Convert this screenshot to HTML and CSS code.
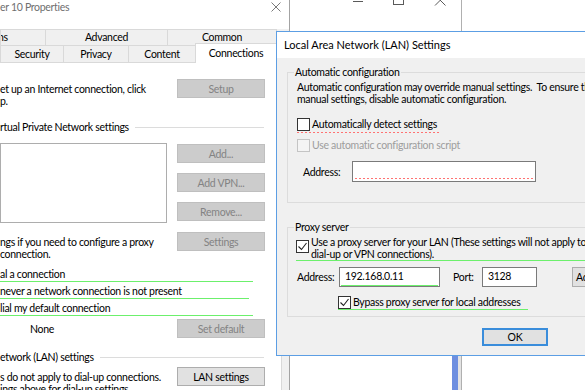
FILE: index.html
```html
<!DOCTYPE html>
<html>
<head>
<meta charset="utf-8">
<link rel="stylesheet" href="styles.css">
</head>
<body>
<div class="desk">

  <div class="win3">
    <svg class="w3-ctrls" width="172" height="10" viewBox="0 0 172 10">
      <line x1="63" y1="1.5" x2="73" y2="1.5" stroke="#5a5a5a" stroke-width="1"/>
      <rect x="103.5" y="-5.5" width="10" height="10" fill="none" stroke="#5a5a5a" stroke-width="1"/>
      <line x1="145" y1="-5" x2="155.5" y2="5.5" stroke="#5a5a5a" stroke-width="1"/>
      <line x1="155.5" y1="-5" x2="145" y2="5.5" stroke="#5a5a5a" stroke-width="1"/>
    </svg>
    <div class="w3-body">
      <div class="w3-main"></div>
      <div class="w3-stripe"></div>
      <div class="w3-edge"></div>
    </div>
  </div>

  <div class="win-props">
    <div class="titlebar">
      <span class="title">er 10 Properties</span>
      <svg class="close" width="10" height="10" viewBox="0 0 10 10">
        <line x1="0.5" y1="0.5" x2="9.5" y2="9.5" stroke="#7a7a7a" stroke-width="1"/>
        <line x1="9.5" y1="0.5" x2="0.5" y2="9.5" stroke="#7a7a7a" stroke-width="1"/>
      </svg>
    </div>
    <div class="tabs">
      <div class="tabrow r1">
        <div class="tab w45"><span class="cut">ns</span></div>
        <div class="tab w122">Advanced</div>
        <div class="tab w109">Common</div>
      </div>
      <div class="tabrow r2">
        <div class="tab w63">Security</div>
        <div class="tab w65">Privacy</div>
        <div class="tab w67">Content</div>
        <div class="tab sel">Connections</div>
      </div>
    </div>
    <div class="page">
      <div class="row ra">
        <div class="txt">et up an Internet connection, click<br>p.</div>
        <div class="btn dis">Setup</div>
      </div>
      <div class="hdr h1">
        <span>rtual Private Network settings</span>
        <div class="hline"></div>
      </div>
      <div class="row vpn">
        <div class="listbox"></div>
        <div class="btncol">
          <div class="btn dis">Add...</div>
          <div class="btn dis">Add VPN...</div>
          <div class="btn dis">Remove...</div>
        </div>
      </div>
      <div class="row rs">
        <div class="txt">ngs if you need to configure a proxy<br>connection.</div>
        <div class="btn dis">Settings</div>
      </div>
      <div class="radios">
        <div class="radio w253">al a connection</div>
        <div class="radio w249">never a network connection is not present</div>
        <div class="radio w253">lial my default connection</div>
      </div>
      <div class="row rn">
        <div class="txt none">None</div>
        <div class="btn dis">Set default</div>
      </div>
      <div class="hdr h2">
        <span>etwork (LAN) settings</span>
        <div class="hline"></div>
      </div>
      <div class="row rl">
        <div class="txt">s do not apply to dial-up connections.<br>ings above for dial-up settings.</div>
        <div class="btn en">LAN settings</div>
      </div>
    </div>
  </div>

  <div class="lan">
    <div class="lan-title">Local Area Network (LAN) Settings</div>
    <div class="lan-body">
      <fieldset class="grp g1">
        <legend>Automatic configuration</legend>
        <div class="grp-in gi1">
          <div class="desc">Automatic configuration may override manual settings.&nbsp; To ensure the use of<br>manual settings, disable automatic configuration.</div>
          <div class="cb-row auto">
            <span class="box"></span>
            <span class="lbl">Automatically detect settings</span>
          </div>
          <div class="cb-row script">
            <span class="box off"></span>
            <span class="lbl grey">Use automatic configuration script</span>
          </div>
          <div class="addr-row">
            <span class="alabel">Address:</span>
            <div class="inp wide"><div class="dash"></div></div>
          </div>
        </div>
      </fieldset>
      <fieldset class="grp g2">
        <legend>Proxy server</legend>
        <div class="grp-in gi2">
          <div class="proxy-row">
            <span class="box">
              <svg width="11" height="11" viewBox="0 0 11 11"><polyline points="1.5,5.5 4.5,8.5 9.5,2" fill="none" stroke="#222" stroke-width="1.1"/></svg>
            </span>
            <span class="plbl">Use a proxy server for your LAN (These settings will not apply to<br>dial-up or VPN connections).</span>
          </div>
          <div class="pa-row">
            <span class="plabel">Address:</span>
            <div class="inp ip"><div class="val">192.168.0.11</div></div>
            <span class="port">Port:</span>
            <div class="inp pp"><div class="val2">3128</div></div>
            <div class="btn en adv">Advanced</div>
          </div>
          <div class="bypass">
            <span class="box">
              <svg width="11" height="11" viewBox="0 0 11 11"><polyline points="1.5,5.5 4.5,8.5 9.5,2" fill="none" stroke="#222" stroke-width="1.1"/></svg>
            </span>
            <span class="lbl">Bypass proxy server for local addresses</span>
          </div>
        </div>
      </fieldset>
      <div class="okbtn">OK</div>
    </div>
  </div>

</div>
</body>
</html>
```
FILE: styles.css
```css
* { box-sizing: border-box; }
html, body { margin: 0; padding: 0; }
body {
  width: 585px; height: 390px; overflow: hidden; background: #fff;
  font-family: "Lato", "Liberation Sans", sans-serif; font-size: 10.5px;
  letter-spacing: -0.3px; color: #000;
}
.desk { position: relative; width: 585px; height: 390px; overflow: hidden; }

/* third window behind */
.win3 {
  position: absolute; left: 289px; top: 0; width: 173px; height: 390px;
  background: #fff; border-left: 1px solid #a3a3a3; border-right: 1px solid #b0b0b0;
  display: flex; flex-direction: column;
}
.w3-ctrls { display: block; flex: none; }
.w3-body { flex: 1; display: flex; margin-top: 21px; }
.w3-main { flex: 1; }
.w3-stripe { width: 6px; background: #6e8fe0; }
.w3-edge { width: 3px; background: #e3e3e3; }

/* internet properties */
.win-props {
  position: absolute; left: 0; top: 0; width: 289px; height: 390px;
  background: #f0f0f0;
}
.titlebar {
  height: 29px; background: #fff; display: flex; justify-content: space-between;
  align-items: flex-start;
}
.title { line-height: 13px; padding-top: 1px; color: #6f6f6f; white-space: nowrap; }
.close { margin: 2px 8px 0 0; display: block; }
.tabs { height: 33px; }
.tabrow { display: flex; align-items: flex-start; }
.r1 { height: 16px; }
.r2 { height: 17px; }
.tab {
  border: 1px solid #d9d9d9; border-right: none; border-bottom: none;
  background: #f0f0f0; text-align: center; white-space: nowrap; overflow: hidden; flex: none;
}
.r1 .tab { height: 16px; line-height: 15px; }
.r2 .tab { height: 17px; line-height: 16px; }
.w45 { width: 45px; text-align: left; }
.cut { margin-left: -3px; }
.w122 { width: 122px; }
.w109 { width: 110px; border-right: 1px solid #d9d9d9; }
.w63 { width: 63px; }
.w65 { width: 65px; }
.w67 { width: 67px; }
.r2 .tab.sel {
  width: 82px; height: 20px; margin-top: -2px; background: #fff;
  border-right: 1px solid #d9d9d9; line-height: 18px; position: relative; z-index: 2;
}
.page {
  background: #fff; width: 282px; height: 328px;
  border-top: 1px solid #d9d9d9; border-right: 1px solid #d9d9d9;
}
.row { display: flex; align-items: flex-start; width: 265px; }
.txt { margin-top: 4px; line-height: 12px; white-space: nowrap; flex: 1; min-width: 0; }
.btn {
  width: 88px; height: 19px; flex: none; display: flex; align-items: center;
  justify-content: center; line-height: 12px; white-space: nowrap;
}
.row > .btn, .row > .btncol { margin-left: auto; }
.btn.dis { background: #cccccc; border: 1px solid #bfbfbf; color: #838383; }
.btn.en { background: #e1e1e1; border: 1px solid #adadad; color: #000; }
.ra { margin-top: 16px; }
.hdr { display: flex; align-items: center; width: 264px; line-height: 12px; white-space: nowrap; }
.hline { flex: 1; height: 1px; background: #dcdcdc; margin-left: 6px; }
.h1 { margin-top: 14px; }
.vpn { margin-top: 10px; }
.listbox { width: 167px; height: 80px; border: 1px solid #adadad; background: #fff; flex: none; }
.btncol { display: flex; flex-direction: column; gap: 10px; margin-top: 1px; }
.rs { margin-top: 9px; }
.radios { margin-top: 8px; display: flex; flex-direction: column; gap: 3px; }
.radio { height: 14px; line-height: 13px; border-bottom: 1px solid #6cf06c; white-space: nowrap; }
.w253 { width: 253px; }
.w249 { width: 249px; }
.rn { margin-top: 3px; }
.none { margin-left: 30px; }
.h2 { margin-top: 13px; }
.rl { margin-top: 4px; }

/* LAN dialog */
.lan {
  position: absolute; left: 276px; top: 31px; width: 330px; height: 325px;
  border: 1px solid #5c9ee4; background: #f0f0f0; z-index: 5;
}
.lan-title {
  height: 26px; line-height: 26px; background: #fff; padding-left: 7px; white-space: nowrap;
  font-size: 11px; letter-spacing: 0;
}
.lan-body { padding-left: 10px; }
.grp { margin: 0; padding: 0; border: 1px solid #dcdcdc; width: 310px; min-width: 0; }
.grp legend { margin-left: 6px; padding: 0 1px; line-height: 12px; }
.g1 { margin-top: 8px; }
.g2 { margin-top: 18px; }
.grp-in { padding-left: 9px; }
.gi1 { padding-top: 3px; padding-bottom: 20px; }
.desc { line-height: 12px; white-space: nowrap; }
.cb-row { display: flex; align-items: center; height: 13px; white-space: nowrap; }
.box {
  width: 13px; height: 13px; border: 1px solid #333; background: #fff; flex: none;
  display: flex; align-items: center; justify-content: center;
}
.box svg { display: block; }
.box.off { border-color: #c4c4c4; background: #f4f4f4; }
.lbl { margin-left: 2px; line-height: 13px; }
.grey { color: #9d9d9d; }
.auto { margin-top: 13px; width: 144px; height: 14px; align-items: flex-start; position: relative; }
.auto::after {
  content: ""; position: absolute; left: 0; right: 0; bottom: -1px; height: 1px;
  background: repeating-linear-gradient(90deg, #ff7272 0 2px, transparent 2px 4px);
}
.script { margin-top: 7px; }
.addr-row { display: flex; align-items: center; margin-top: 9px; }
.alabel { margin-left: 6px; width: 49px; white-space: nowrap; flex: none; }
.inp { border: 1px solid #7a7a7a; background: #fff; height: 21px; flex: none; }
.wide { width: 184px; padding: 16px 2px 0 2px; }
.dash { height: 1px; background: repeating-linear-gradient(90deg, #ff7272 0 2px, transparent 2px 4px); }

.gi2 { padding-top: 3px; padding-bottom: 6px; }
.proxy-row {
  display: flex; align-items: flex-start; height: 25px;
  border-bottom: 1px solid #6cf06c; margin-left: -1px; white-space: nowrap;
}
.proxy-row .box { margin-top: 4px; }
.plbl { margin-left: 2px; line-height: 12px; }
.pa-row { display: flex; align-items: center; margin-top: 6px; white-space: nowrap; }
.pa-row > * { flex: none; }
.plabel { width: 42px; }
.ip { width: 101px; height: 20px; padding: 0 1px; }
.val { height: 18px; line-height: 16px; padding-left: 4px; border-bottom: 1px solid #6cf06c; }
.port { margin-left: 13px; width: 29px; }
.pp { width: 55px; height: 20px; }
.val2 { line-height: 16px; padding-left: 5px; }
.adv { margin-left: 35px; width: 75px; height: 20px; justify-content: flex-start; padding-left: 3px; }
.bypass {
  display: flex; align-items: center; height: 14px; width: 190px; margin-left: 41px;
  margin-top: 9px; border-bottom: 1px solid #6cf06c; white-space: nowrap;
}
.bypass .box { align-self: flex-start; }
.okbtn {
  margin: 11px 0 0 195px; width: 66px; height: 18px; border: 2px solid #3a8ddb;
  background: #e1e1e1; display: flex; align-items: center; justify-content: center;
  line-height: 12px;
}
```
